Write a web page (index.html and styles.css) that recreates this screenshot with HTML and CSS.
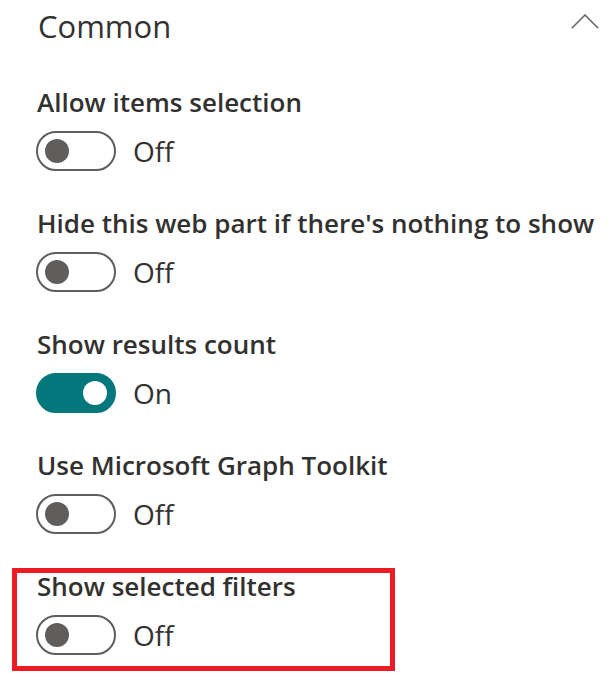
FILE: index.html
```html
<!DOCTYPE html>
<html lang="en">
<head>
<meta charset="utf-8">
<title>Common settings</title>
<link rel="stylesheet" href="styles.css">
</head>
<body>
<div class="pane">
  <div class="group-header">
    <span class="group-title">Common</span>
    <svg class="chevron" width="28" height="15" viewBox="0 0 28 15" aria-hidden="true">
      <polyline points="0.8,14.2 14,1 27.2,14.2" fill="none" stroke="#666666" stroke-width="1.6"/>
    </svg>
  </div>
  <div class="items">
    <div class="item">
      <div class="label">Allow items selection</div>
      <div class="toggle-row">
        <span class="toggle"><span class="knob"></span></span>
        <span class="state">Off</span>
      </div>
    </div>
    <div class="item">
      <div class="label">Hide this web part if there's nothing to show</div>
      <div class="toggle-row">
        <span class="toggle"><span class="knob"></span></span>
        <span class="state">Off</span>
      </div>
    </div>
    <div class="item">
      <div class="label">Show results count</div>
      <div class="toggle-row">
        <span class="toggle on"><span class="knob"></span></span>
        <span class="state">On</span>
      </div>
    </div>
    <div class="item">
      <div class="label">Use Microsoft Graph Toolkit</div>
      <div class="toggle-row">
        <span class="toggle"><span class="knob"></span></span>
        <span class="state">Off</span>
      </div>
    </div>
    <div class="item highlight">
      <div class="label">Show selected filters</div>
      <div class="toggle-row">
        <span class="toggle"><span class="knob"></span></span>
        <span class="state">Off</span>
      </div>
    </div>
  </div>
</div>
</body>
</html>
```

FILE: styles.css
```css
html, body {
  margin: 0;
  padding: 0;
  background: #ffffff;
}

body {
  font-family: "Open Sans", "Noto Sans", sans-serif;
  color: #323130;
}

.pane {
  width: 612px;
  padding: 6px 0 0 37px;
  box-sizing: border-box;
}

.group-header {
  display: flex;
  align-items: flex-start;
  justify-content: space-between;
  height: 40px;
  padding-right: 13px;
}

.group-title {
  font-size: 31px;
  line-height: 40px;
  font-weight: 400;
  color: #323130;
  margin-left: 1px;
}

.chevron {
  margin-top: 8px;
  display: block;
}

.items {
  display: flex;
  flex-direction: column;
  gap: 34px;
  margin-top: 38px;
}

.label {
  font-size: 26px;
  line-height: 36px;
  font-weight: 600;
  color: #323130;
  white-space: nowrap;
}

.toggle-row {
  display: flex;
  align-items: center;
  margin-top: 11px;
  margin-left: -1px;
}

.toggle {
  box-sizing: border-box;
  width: 80px;
  height: 40px;
  border: 2px solid #605e5c;
  border-radius: 20px;
  padding: 0 7px;
  display: flex;
  align-items: center;
  justify-content: flex-start;
  background: #ffffff;
}

.knob {
  width: 24px;
  height: 24px;
  border-radius: 50%;
  background: #605e5c;
}

.toggle.on {
  background: #03787c;
  border-color: #03787c;
  justify-content: flex-end;
}

.toggle.on .knob {
  background: #ffffff;
}

.state {
  font-size: 28px;
  line-height: 40px;
  margin-left: 17px;
  color: #323130;
}

.item.highlight {
  border: 5px solid #ec1c24;
  margin-left: -25px;
  padding: 0 0 11px 20px;
  width: 383px;
  box-sizing: border-box;
}

.item.highlight .label {
  margin-top: -5px;
}
```
